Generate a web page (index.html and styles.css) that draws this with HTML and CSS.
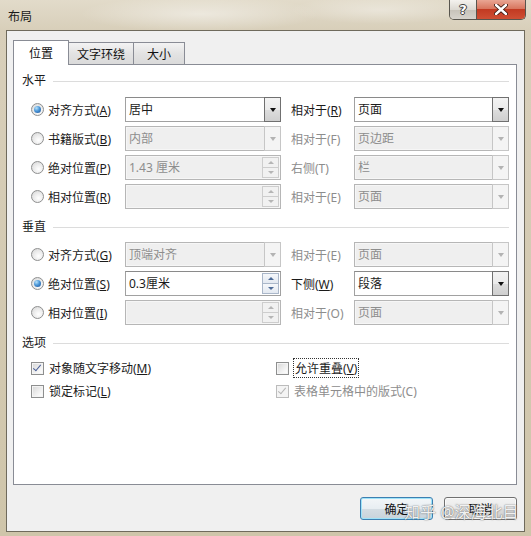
FILE: index.html
```html
<!DOCTYPE html>
<html lang="zh-CN">
<head>
  <meta charset="UTF-8">
  <title>布局</title>
  <link rel="stylesheet" href="styles.css">
</head>
<body>

<div class="window">
  <div class="titlebar">
    <span class="title">布局</span>
    <div class="caption-buttons">
      <div class="cap help">?</div>
      <div class="cap close">
        <svg width="14" height="11" viewBox="0 0 14 11">
          <path d="M2 1 L12 10 M12 1 L2 10" stroke="#3a1810" stroke-width="4.2" stroke-linecap="round"/>
          <path d="M2 1 L12 10 M12 1 L2 10" stroke="#ffffff" stroke-width="2.4" stroke-linecap="round"/>
        </svg>
      </div>
    </div>
  </div>

  <div class="client">
    <div class="tabs">
      <div class="tab active">位置</div>
      <div class="tab w2">文字环绕</div>
      <div class="tab w3">大小</div>
    </div>

    <div class="panel">
      <!-- 水平 -->
      <div class="group-title">水平</div>
      <div class="form-grid">
        <label class="opt"><span class="radio checked"></span><span>对齐方式(<u>A</u>)</span></label>
        <div class="field"><span class="value">居中</span><span class="drop"></span></div>
        <span class="side-label"><span>相对于(<u>R</u>)</span></span>
        <div class="field"><span class="value">页面</span><span class="drop"></span></div>

        <label class="opt"><span class="radio"></span><span>书籍版式(<u>B</u>)</span></label>
        <div class="field disabled"><span class="value">内部</span><span class="drop"></span></div>
        <span class="side-label disabled">相对于(F)</span>
        <div class="field disabled"><span class="value">页边距</span><span class="drop"></span></div>

        <label class="opt"><span class="radio"></span><span>绝对位置(<u>P</u>)</span></label>
        <div class="field disabled"><span class="value">1.43 厘米</span><span class="spin"><span class="up"></span><span class="down"></span></span></div>
        <span class="side-label disabled">右侧(T)</span>
        <div class="field disabled"><span class="value">栏</span><span class="drop"></span></div>

        <label class="opt"><span class="radio"></span><span>相对位置(<u>R</u>)</span></label>
        <div class="field disabled"><span class="value"></span><span class="spin"><span class="up"></span><span class="down"></span></span></div>
        <span class="side-label disabled">相对于(E)</span>
        <div class="field disabled"><span class="value">页面</span><span class="drop"></span></div>
      </div>

      <!-- 垂直 -->
      <div class="group-title second">垂直</div>
      <div class="form-grid tight">
        <label class="opt"><span class="radio"></span><span>对齐方式(<u>G</u>)</span></label>
        <div class="field disabled"><span class="value">顶端对齐</span><span class="drop"></span></div>
        <span class="side-label disabled">相对于(E)</span>
        <div class="field disabled"><span class="value">页面</span><span class="drop"></span></div>

        <label class="opt"><span class="radio checked"></span><span>绝对位置(<u>S</u>)</span></label>
        <div class="field"><span class="value">0.3厘米</span><span class="spin"><span class="up"></span><span class="down"></span></span></div>
        <span class="side-label"><span>下侧(<u>W</u>)</span></span>
        <div class="field"><span class="value">段落</span><span class="drop"></span></div>

        <label class="opt"><span class="radio"></span><span>相对位置(<u>I</u>)</span></label>
        <div class="field disabled"><span class="value"></span><span class="spin"><span class="up"></span><span class="down"></span></span></div>
        <span class="side-label disabled">相对于(O)</span>
        <div class="field disabled"><span class="value">页面</span><span class="drop"></span></div>
      </div>

      <!-- 选项 -->
      <div class="group-title third">选项</div>
      <div class="options">
        <label class="opt"><span class="check checked"></span><span>对象随文字移动(<u>M</u>)</span></label>
        <label class="opt"><span class="check"></span><span class="focus">允许重叠(<u>V</u>)</span></label>
        <label class="opt"><span class="check"></span><span>锁定标记(<u>L</u>)</span></label>
        <label class="opt disabled"><span class="check checked"></span><span>表格单元格中的版式(C)</span></label>
      </div>
    </div>

    <div class="buttons">
      <div class="btn default">确定</div>
      <div class="btn">取消</div>
    </div>
  </div>

  <div class="watermark">知乎 @深海北目</div>
</div>

</body>
</html>
```

FILE: styles.css
```css
body {
  margin: 0;
  font-family: "Noto Sans", "Noto Sans CJK SC", sans-serif;
  font-size: 12px;
  color: #1b1b1b;
}

.window {
  width: 531px;
  height: 536px;
  position: relative;
  overflow: hidden;
  background:
    radial-gradient(ellipse 120px 18px at 200px 14px, rgba(255,255,255,0.45), rgba(255,255,255,0)),
    radial-gradient(ellipse 90px 14px at 380px 10px, rgba(255,255,255,0.35), rgba(255,255,255,0)),
    linear-gradient(180deg, #e2dbca 0%, #d8cfba 30px, #cfc5aa 100%);
}

.titlebar {
  height: 30px;
  display: flex;
  justify-content: space-between;
  align-items: flex-start;
}

.title {
  margin: 9px 0 0 8px;
  line-height: 16px;
  color: #1a1a1a;
}

.caption-buttons {
  display: flex;
  margin-right: 5px;
  border: 1px solid #58554e;
  border-top: none;
  border-radius: 0 0 5px 5px;
  overflow: hidden;
  height: 19px;
}

.cap {
  height: 19px;
  display: flex;
  align-items: center;
  justify-content: center;
}

.help {
  width: 26px;
  border-right: 1px solid #58554e;
  background: linear-gradient(#f4f2ee 0%, #dcd9d2 50%, #c6c2b9 51%, #d6d3cc 100%);
  color: #fff;
  font-family: "DejaVu Sans", sans-serif;
  font-weight: bold;
  font-size: 13px;
  text-shadow: 0 0 1px #333, 1px 0 0 #444, -1px 0 0 #444, 0 1px 0 #444, 0 -1px 0 #444;
}

.close {
  width: 48px;
  background: linear-gradient(#e9a593 0%, #d8765f 45%, #c23a22 50%, #cf4f34 100%);
}

.client {
  width: 519px;
  height: 502px;
  margin-left: 6px;
  box-sizing: border-box;
  border: 1px solid #6f6a5c;
  background: #f0f0f0;
  padding: 9px 7px 0 6px;
}

/* tabs */
.tabs {
  display: flex;
  align-items: flex-end;
  height: 24px;
}

.tab {
  width: 65px;
  height: 22px;
  box-sizing: border-box;
  border: 1px solid #898c95;
  border-bottom: none;
  border-left: none;
  background: linear-gradient(#f3f3f3, #e3e3e3 50%, #dadada);
  display: flex;
  align-items: center;
  justify-content: center;
  color: #111;
}

.tab.w3 {
  width: 51px;
}

.tab.active {
  width: 56px;
  height: 25px;
  margin-bottom: -1px;
  border-left: 1px solid #898c95;
  background: #fff;
  position: relative;
  z-index: 1;
  padding-bottom: 1px;
}

.panel {
  width: 504px;
  height: 421px;
  box-sizing: border-box;
  border: 1px solid #898c95;
  background: #fff;
  padding: 8px 7px 0 0;
}

.group-title {
  display: flex;
  align-items: center;
  gap: 7px;
  margin-left: 8px;
  line-height: 16px;
  height: 16px;
}

.group-title::after {
  content: "";
  flex: 1;
  height: 1px;
  background: #dcdcdc;
}

.group-title.second {
  margin-top: 10px;
}

.group-title.third {
  margin-top: 10px;
}

.form-grid {
  display: grid;
  grid-template-columns: 94px 156px 73px 155px;
  grid-auto-rows: 25px;
  row-gap: 4px;
  margin: 8px 0 0 17px;
}

.form-grid.tight {
  margin-top: 7px;
}

.opt {
  display: flex;
  align-items: center;
  gap: 4px;
  white-space: nowrap;
}

.opt u,
.side-label u {
  text-underline-offset: 1px;
}

.opt.disabled {
  color: #8d8d8d;
}

.side-label {
  display: flex;
  align-items: center;
  padding-left: 10px;
  white-space: nowrap;
}

.side-label.disabled {
  color: #8d8d8d;
}

/* radio */
.radio {
  width: 13px;
  height: 13px;
  box-sizing: border-box;
  border-radius: 50%;
  border: 1px solid #8e8f8f;
  background: radial-gradient(circle at 60% 65%, #ffffff 0%, #ebebeb 50%, #d2d2d2 100%);
  display: flex;
  align-items: center;
  justify-content: center;
  flex-shrink: 0;
}

.radio.checked::after {
  content: "";
  width: 7px;
  height: 7px;
  border-radius: 50%;
  background: radial-gradient(circle at 35% 30%, #b7e2fb 0%, #4b97d8 45%, #1b4f95 100%);
}

/* checkbox */
.check {
  width: 13px;
  height: 13px;
  box-sizing: border-box;
  border: 1px solid #8e8f8f;
  background: linear-gradient(135deg, #d6d6d6, #f6f6f6 70%, #ffffff);
  box-shadow: inset 0 0 0 1px #f4f4f4;
  flex-shrink: 0;
  margin-right: 1px;
  position: relative;
}

.check.checked::after {
  content: "";
  position: absolute;
  left: 3px;
  top: 0px;
  width: 3px;
  height: 7px;
  border: solid #4a5f97;
  border-width: 0 1.5px 1.5px 0;
  transform: rotate(40deg);
}

.opt.disabled .check {
  border-color: #bcbcbc;
  background: #f4f4f4;
}

.opt.disabled .check.checked::after {
  border-color: #b5b5b5;
}

.focus {
  outline: 1px dotted #333;
  outline-offset: 0;
  padding: 0 1px;
}

/* combo / spin fields */
.field {
  display: flex;
  box-sizing: border-box;
  border: 1px solid #a1a1a1;
  border-top-color: #8a8a8a;
  background: #fff;
}

.field .value {
  flex: 1;
  padding-left: 3px;
  line-height: 23px;
  white-space: nowrap;
  overflow: hidden;
}

.field.disabled {
  border-color: #b6b6b6;
  background: #efefef;
  box-shadow: inset 0 0 0 1px #f6f6f6;
}

.field.disabled .value {
  color: #8d8d8d;
}

.drop {
  width: 17px;
  box-sizing: border-box;
  border: 1px solid #707070;
  margin: -1px -1px -1px 0;
  background: linear-gradient(#f3f3f3 0%, #ebebeb 50%, #dddddd 51%, #cfcfcf 100%);
  display: flex;
  align-items: center;
  justify-content: center;
}

.drop::after {
  content: "";
  border-left: 3.5px solid transparent;
  border-right: 3.5px solid transparent;
  border-top: 4px solid #111;
  margin-top: 1px;
}

.field.disabled .drop {
  border-color: #c6c6c6;
  background: #f4f4f4;
}

.field.disabled .drop::after {
  border-top-color: #b3b3b3;
}

.spin {
  width: 17px;
  display: flex;
  flex-direction: column;
  gap: 0;
  padding: 1px 1px 1px 0;
}

.spin span {
  flex: 1;
  box-sizing: border-box;
  border: 1px solid #aab7c9;
  background: linear-gradient(#f6f8fb, #e3e9f1);
  display: flex;
  align-items: center;
  justify-content: center;
}

.spin .up {
  border-bottom: none;
}

.spin .up::after {
  content: "";
  border-left: 3px solid transparent;
  border-right: 3px solid transparent;
  border-bottom: 3px solid #4e6c98;
}

.spin .down::after {
  content: "";
  border-left: 3px solid transparent;
  border-right: 3px solid transparent;
  border-top: 3px solid #4e6c98;
}

.field.disabled .spin span {
  border-color: #cdcdcd;
  background: #f1f1f1;
}

.field.disabled .spin .up::after {
  border-bottom-color: #b5b5b5;
}

.field.disabled .spin .down::after {
  border-top-color: #b5b5b5;
}

/* options */
.options {
  display: grid;
  grid-template-columns: 245px 1fr;
  grid-auto-rows: 16px;
  row-gap: 7px;
  margin: 9px 0 0 17px;
}

/* buttons */
.buttons {
  display: flex;
  justify-content: flex-end;
  gap: 11px;
  margin-top: 12px;
}

.btn {
  width: 73px;
  height: 23px;
  box-sizing: border-box;
  border: 1px solid #707070;
  border-radius: 3px;
  background: linear-gradient(#f2f2f2 0%, #ebebeb 50%, #dddddd 51%, #cfcfcf 100%);
  box-shadow: inset 0 0 0 1px #fbfbfb;
  display: flex;
  align-items: center;
  justify-content: center;
  color: #111;
}

.btn.default {
  border-color: #3c7fb1;
  box-shadow: inset 0 0 0 1px #9ee3f9;
  background: linear-gradient(#f3f6f8 0%, #e8eef2 50%, #d4dde3 51%, #c8d3db 100%);
}

.watermark {
  position: absolute;
  left: 404px;
  top: 502px;
  font-size: 16px;
  line-height: 20px;
  color: rgba(255,255,255,0.92);
  text-shadow: 0 0 1px rgba(60,60,60,0.7), 0 0 2px rgba(60,60,60,0.4);
  white-space: nowrap;
}
```
